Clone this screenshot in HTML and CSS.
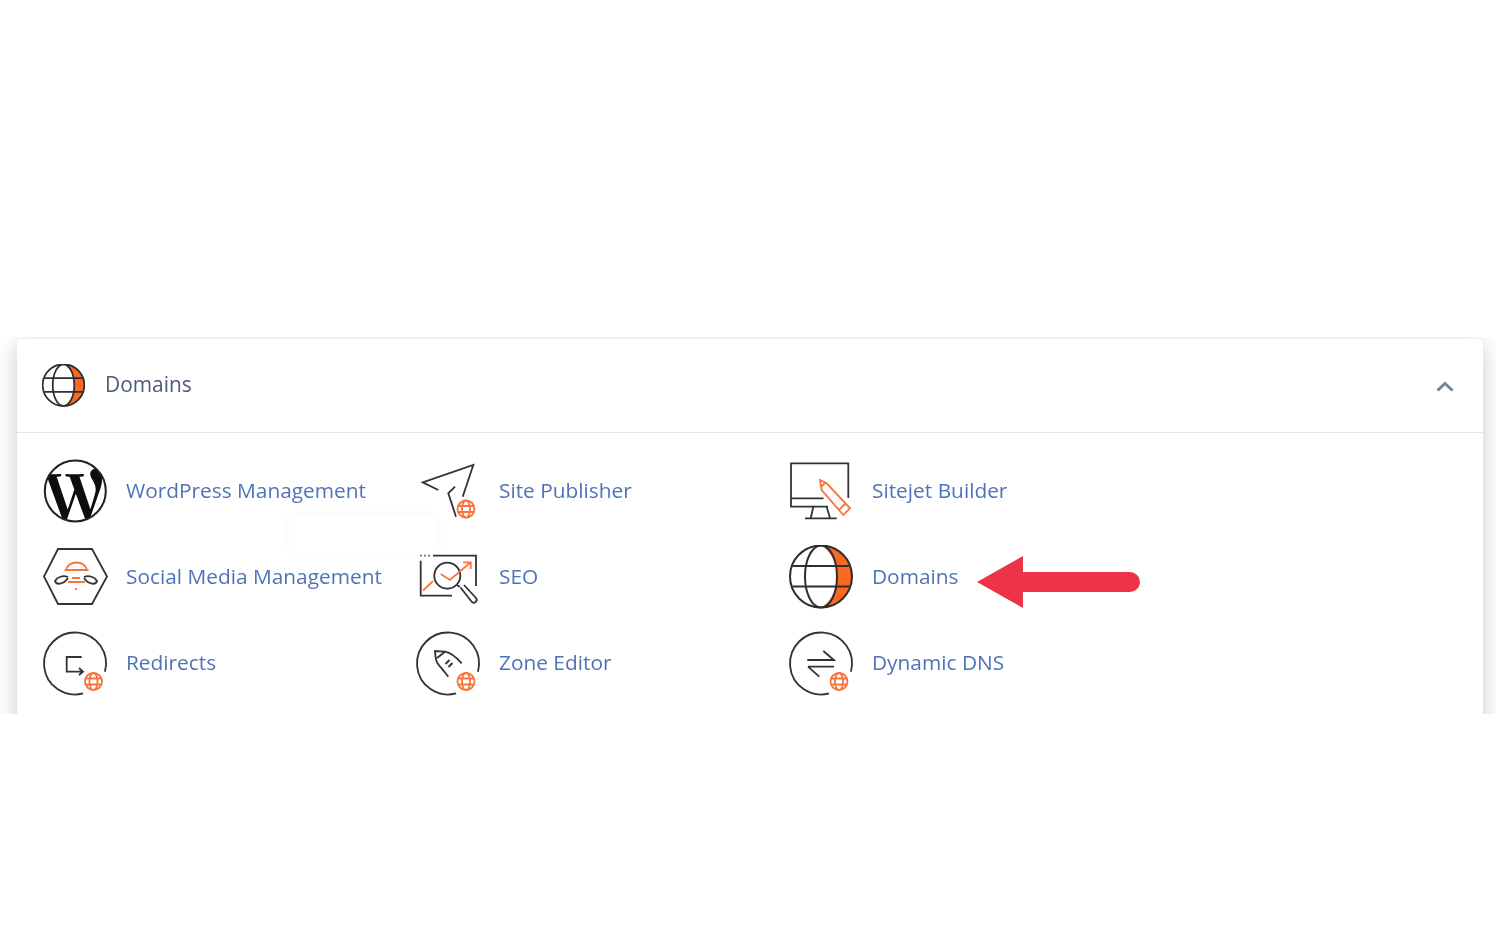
FILE: index.html
```html
<!DOCTYPE html>
<html lang="en">
<head>
    <meta charset="UTF-8">
    <meta name="viewport" content="width=device-width, initial-scale=1.0">
    <title>Domains</title>
    <link rel="stylesheet" href="styles.css">
</head>
<body>
    <svg class="sprites" aria-hidden="true">
        <symbol id="globe" viewBox="0 0 64 64">
            <path class="fill-orange" d="M32 .5A31 31 0 0 1 32 62.5C42 57 48 45 48 31.5S42 6 32 .5z"/>
            <circle class="globe-line" cx="32" cy="31.5" r="31"/>
            <ellipse class="globe-line" cx="32" cy="31.5" rx="16" ry="31"/>
            <path class="globe-line" d="M3.5 21H60.5M3.5 41.500H60.500"/>
        </symbol>
        <symbol id="badge" viewBox="0 0 20 20">
            <circle class="badge-line" cx="10" cy="10" r="8.500"/>
            <ellipse class="badge-line" cx="10" cy="10" rx="4" ry="8.500"/>
            <path class="badge-line" d="M2 7H18M2 13H18"/>
        </symbol>
    </svg>

    <div class="clip">
        <section class="card">
            <header class="card-head">
                <svg class="head-icon"><use href="#globe"/></svg>
                <h2 class="card-title">Domains</h2>
                <svg class="chevron" viewBox="0 0 18 11"><path d="M1.500 9.500L9 2.500L16.500 9.500"/></svg>
            </header>

            <div class="tools">
                <a class="tool" href="#">
                    <svg class="tool-icon" viewBox="0 0 64 64">
                        <clipPath id="wp-disc"><circle cx="32.300" cy="32" r="30.500"/></clipPath>
                        <g clip-path="url(#wp-disc)">
                            <g transform="translate(32.300 32) scale(2.8) translate(-12 -12)">
                                <path class="wp-mark" d="M21.469 6.825c.84 1.537 1.318 3.3 1.318 5.175 0 3.979-2.156 7.456-5.363 9.325l3.295-9.527c.615-1.54.82-2.771.82-3.864 0-.405-.026-.78-.07-1.11m-7.981.105c.647-.03 1.232-.105 1.232-.105.582-.075.514-.93-.067-.899 0 0-1.755.135-2.88.135-1.064 0-2.85-.15-2.85-.15-.585-.03-.661.855-.075.885 0 0 .54.061 1.125.09l1.68 4.605-2.37 7.08L5.354 6.9c.649-.03 1.234-.1 1.234-.1.585-.075.516-.93-.065-.896 0 0-1.746.138-2.874.138-.2 0-.438-.008-.69-.015C4.911 3.15 8.235 1.215 12 1.215c2.809 0 5.365 1.072 7.286 2.833-.046-.003-.091-.009-.141-.009-1.06 0-1.812.923-1.812 1.914 0 .89.513 1.643 1.06 2.531.411.72.89 1.643.89 2.977 0 .915-.354 1.994-.821 3.479l-1.075 3.585-3.9-11.61.001.014zM12 22.784c-1.059 0-2.081-.153-3.048-.437l3.237-9.406 3.315 9.087c.024.053.05.101.078.149-1.12.393-2.325.609-3.582.609M1.211 12c0-1.564.336-3.05.935-4.39L7.29 21.709C3.694 19.96 1.212 16.271 1.211 12M12 0C5.385 0 0 5.385 0 12s5.385 12 12 12 12-5.385 12-12S18.615 0 12 0"/>
                            </g>
                        </g>
                        <circle class="wp-ring" cx="32.300" cy="32" r="30.500"/>
                    </svg>
                    <span>WordPress Management</span>
                </a>
                <a class="tool" href="#">
                    <svg class="tool-icon" viewBox="0 0 64 64">
                        <path class="line" d="M46.700 37.700L57.300 6L6.700 23.300L22.300 31M39 27.700L32.300 34.300L40 57.700"/>
                        <use href="#badge" x="40" y="40" width="20" height="20"/>
                    </svg>
                    <span>Site Publisher</span>
                </a>
                <a class="tool" href="#">
                    <svg class="tool-icon" viewBox="0 0 64 64">
                        <path class="line" d="M59.300 39V4.300H2V47.700H39M2 39.300H34.500M24.300 47.700L21.700 59.300M37.700 47.700L41 59.300M16 59.300H47.700"/>
                        <path class="orange" d="M31 21L37.700 24.300L61 49.300L54.300 56L32.700 31zM56.500 44.500L49.800 51M32 28L36 24"/>
                    </svg>
                    <span>Sitejet Builder</span>
                </a>

                <a class="tool" href="#">
                    <svg class="tool-icon" viewBox="0 0 64 64">
                        <path class="line" d="M15 4H49L64 31.500L49 59H15L1 31.500z"/>
                        <path class="orange" d="M23.500 25A10 7.500 0 0 1 43.500 25M21.500 25H45.500M29 33H37M25 37H42M33 43V45"/>
                        <path class="line" d="M25 32C20 30 14 32 12 36C13 40 20 40 25 33M41 32C46 30 52 32 54 36C53 40 46 40 41 33"/>
                    </svg>
                    <span>Social Media Management</span>
                </a>
                <a class="tool" href="#">
                    <svg class="tool-icon" viewBox="0 0 64 64">
                        <path class="line" d="M4.700 15.700V50.700H36M60 41V10.700H17"/>
                        <path class="line dotted" d="M4 10.700H16"/>
                        <circle class="line" cx="31.300" cy="30.700" r="13"/>
                        <path class="line" d="M41 40L44 42M44.500 42.500L55.500 56.500A2.500 2.500 0 0 0 60 53L48 40"/>
                        <path class="orange" d="M7 45.700L17 36M24.700 29L34 35L54.700 17.300M47.300 17.300H54.700V24"/>
                    </svg>
                    <span>SEO</span>
                </a>
                <a class="tool" href="#">
                    <svg class="tool-icon" viewBox="0 0 64 64">
                        <use href="#globe"/>
                    </svg>
                    <span>Domains</span>
                </a>

                <a class="tool" href="#">
                    <svg class="tool-icon" viewBox="0 0 64 64">
                        <path class="line" d="M61.900 39.700A31 31 0 1 0 40 61.450"/>
                        <path class="line" d="M38.700 25H23.700V39.700H40M36 36L40 39.700L36 43"/>
                        <use href="#badge" x="40.500" y="39.500" width="20" height="20"/>
                    </svg>
                    <span>Redirects</span>
                </a>
                <a class="tool" href="#">
                    <svg class="tool-icon" viewBox="0 0 64 64">
                        <path class="line" d="M61.900 39.700A31 31 0 1 0 40 61.450"/>
                        <path class="line" d="M45.700 31.300C41 26 36 21 29 19.700L19 19L19.500 24.700C20 30 22 33 25.700 36.300C28 39 30 42 32.300 44.700M21 26L29 19.700M33.500 28L29.500 32M36.500 31L32.500 35"/>
                        <use href="#badge" x="40" y="39.500" width="20" height="20"/>
                    </svg>
                    <span>Zone Editor</span>
                </a>
                <a class="tool" href="#">
                    <svg class="tool-icon" viewBox="0 0 64 64">
                        <path class="line" d="M61.900 39.700A31 31 0 1 0 40 61.450"/>
                        <path class="line" d="M18.300 28H45L34.300 19M19 34.700H45M19 34.700L30.300 44.700"/>
                        <use href="#badge" x="40" y="39.500" width="20" height="20"/>
                    </svg>
                    <span>Dynamic DNS</span>
                </a>
            </div>

            <div class="ghost"></div>
            <svg class="arrow" viewBox="0 0 164 52">
                <path d="M0 26L46 0V16H153A10 10 0 0 1 153 36H46V52z"/>
            </svg>
        </section>
    </div>
</body>
</html>
```

FILE: styles.css
```css
body {
    margin: 0;
    background-color: #fff;
    font-family: "Open Sans", sans-serif;
}

.sprites {
    display: none;
}

/* the screenshot cuts the card off at the top and bottom */
.clip {
    margin-top: 337px;
    padding: 2px 13px 0 17px;
    height: 375px;
    overflow: hidden;
}

.card {
    position: relative;
    background-color: #fff;
    border-radius: 6px;
    box-shadow: 0 5px 22px rgba(60, 75, 100, 0.3);
    height: 460px;
    filter: blur(0.35px);
}

.card-head {
    display: flex;
    align-items: center;
    height: 93px;
    padding: 0 29px 0 25px;
    border-bottom: 1px solid #e0e5f0;
}

.head-icon {
    --globe-stroke: 2.600;
    width: 43px;
    height: 43px;
    margin-right: 20px;
}

.card-title {
    flex: 1;
    margin: 0 0 4px;
    font-size: 20.900px;
    font-weight: 400;
    color: #4d5b75;
}

.chevron {
    width: 18px;
    height: 11px;
    margin-top: 2px;
    fill: none;
    stroke: #73829c;
    stroke-width: 3;
}

.tools {
    display: grid;
    grid-template-columns: repeat(3, 373px);
    grid-auto-rows: 86.25px;
    padding: 15px 0 0 26px;
}

.tool {
    display: flex;
    align-items: center;
    gap: 19px;
    font-size: 20.850px;
    color: #4f73b8;
    text-decoration: none;
    white-space: nowrap;
}

.tool span {
    padding-bottom: 3px;
}

.tool-icon {
    flex: none;
    width: 64px;
    height: 64px;
    overflow: visible;
}

.line {
    fill: none;
    stroke: #333;
    stroke-width: 1.800;
}

.globe-line {
    fill: none;
    stroke: #2e2e2e;
    stroke-width: var(--globe-stroke, 2);
}

.dotted {
    stroke-dasharray: 2 2;
    stroke: #777;
}

.orange {
    fill: none;
    stroke: #f9743a;
    stroke-width: 1.800;
}

.fill-orange {
    fill: #f9691f;
}

.badge-line {
    fill: #fff;
    stroke: #f9743a;
    stroke-width: 1.800;
}

.wp-mark {
    fill: #0d0d0d;
}

.wp-ring {
    fill: none;
    stroke: #222;
    stroke-width: 2;
}

/* faint leftover patch in the screenshot */
.ghost {
    position: absolute;
    left: 272px;
    top: 176px;
    width: 148px;
    height: 38px;
    border-radius: 4px;
    box-shadow: 0 0 10px rgba(60, 75, 100, 0.03);
}

.arrow {
    position: absolute;
    left: 960px;
    top: 217px;
    width: 164px;
    height: 52px;
    fill: #ec3347;
}
```
